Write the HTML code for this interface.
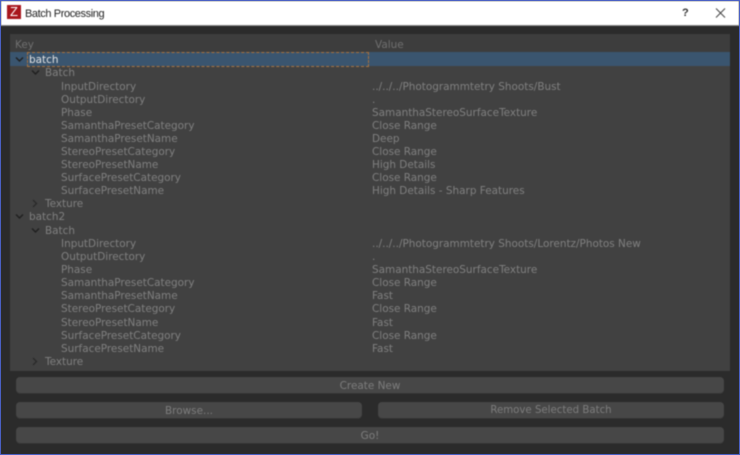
<!DOCTYPE html>
<html><head><meta charset="utf-8">
<style>
html,body{margin:0;padding:0;background:#2b2b2b}
#w{position:relative;width:740px;height:455px;overflow:hidden;background:#2b2b2b;font-family:"DejaVu Sans",sans-serif;font-size:10.45px}
#w div{position:absolute;white-space:pre}
#in{left:0;top:0;width:740px;height:455px;filter:blur(.4px)}
.b{background:#474747;border-radius:4px;height:16px;box-shadow:0 1px 0 #363636}
.bt{color:#7d7d7d;line-height:18px;text-align:center}
.t{color:#808080;line-height:14px;height:14px}
.k{left:61px}.v{left:372px}.g{left:45px}
svg{position:absolute;left:0;top:0}
</style></head><body>
<div id="w"><div id="in">
<div style="left:1px;top:1px;width:738px;height:24px;background:#fff"></div>
<div style="left:0;top:25px;width:740px;height:1px;background:#8a8a8a"></div>
<div style="left:7px;top:5px;width:14px;height:14px;background:#a8161c;color:#fff;font:13px/14px 'Liberation Sans',sans-serif;text-align:center">Z</div>
<div style="left:25px;top:6px;color:#222;font:11px/16px 'Liberation Sans',sans-serif;letter-spacing:-.4px">Batch Processing</div>
<div style="left:682px;top:5px;color:#333;font:bold 11px/16px 'Liberation Sans',sans-serif">?</div>

<div style="left:10px;top:34px;width:720px;height:337px;background:#414141"></div>
<div style="left:10px;top:34px;width:720px;height:18px;background:#3d3d3d"></div>
<div class="t" style="left:15px;top:38px;color:#707070">Key</div>
<div class="t" style="left:375px;top:38px;color:#707070">Value</div>
<div style="left:10px;top:52px;width:720px;height:14px;background:#3a556f"></div>
<div style="left:27px;top:52px;width:340px;height:13px;border:1px dashed #a9733f"></div>
<div class="t" style="left:29px;top:53px;color:#e4e4e4">batch</div>

<div class="t g" style="top:66px">Batch</div>
<div class="t k" style="top:80px">InputDirectory</div><div class="t v" style="top:80px">../../../Photogrammtetry Shoots/Bust</div>
<div class="t k" style="top:93px">OutputDirectory</div><div class="t v" style="top:93px">.</div>
<div class="t k" style="top:106px">Phase</div><div class="t v" style="top:106px">SamanthaStereoSurfaceTexture</div>
<div class="t k" style="top:119px">SamanthaPresetCategory</div><div class="t v" style="top:119px">Close Range</div>
<div class="t k" style="top:132px">SamanthaPresetName</div><div class="t v" style="top:132px">Deep</div>
<div class="t k" style="top:145px">StereoPresetCategory</div><div class="t v" style="top:145px">Close Range</div>
<div class="t k" style="top:158px">StereoPresetName</div><div class="t v" style="top:158px">High Details</div>
<div class="t k" style="top:171px">SurfacePresetCategory</div><div class="t v" style="top:171px">Close Range</div>
<div class="t k" style="top:184px">SurfacePresetName</div><div class="t v" style="top:184px">High Details - Sharp Features</div>
<div class="t g" style="top:197px">Texture</div>
<div class="t" style="left:29px;top:210px">batch2</div>
<div class="t g" style="top:224px">Batch</div>
<div class="t k" style="top:237px">InputDirectory</div><div class="t v" style="top:237px">../../../Photogrammtetry Shoots/Lorentz/Photos New</div>
<div class="t k" style="top:250px">OutputDirectory</div><div class="t v" style="top:250px">.</div>
<div class="t k" style="top:263px">Phase</div><div class="t v" style="top:263px">SamanthaStereoSurfaceTexture</div>
<div class="t k" style="top:276px">SamanthaPresetCategory</div><div class="t v" style="top:276px">Close Range</div>
<div class="t k" style="top:289px">SamanthaPresetName</div><div class="t v" style="top:289px">Fast</div>
<div class="t k" style="top:302px">StereoPresetCategory</div><div class="t v" style="top:302px">Close Range</div>
<div class="t k" style="top:316px">StereoPresetName</div><div class="t v" style="top:316px">Fast</div>
<div class="t k" style="top:329px">SurfacePresetCategory</div><div class="t v" style="top:329px">Close Range</div>
<div class="t k" style="top:342px">SurfacePresetName</div><div class="t v" style="top:342px">Fast</div>
<div class="t g" style="top:355px">Texture</div>

<div class="b bt" style="left:16px;top:377px;width:708px">Create New</div>
<div class="b bt" style="left:16px;top:402px;width:346px">Browse...</div>
<div class="b bt" style="left:378px;top:402px;width:346px;font-size:10.2px">Remove Selected Batch</div>
<div class="b bt" style="left:16px;top:426.500px;width:708px">Go!</div>

<svg width="740" height="455" fill="none">
<path d="M16 57.500l3.500 3.500 3.500-3.500M32 70.500l3.500 3.500 3.500-3.500M16 214.500l3.500 3.500 3.500-3.500M32 228.500l3.500 3.500 3.500-3.500" stroke="#1f1f1f" stroke-width="1.400"/>
<path d="M33 200l3.500 3.500-3.500 3.500M33 358l3.500 3.500-3.500 3.500" stroke="#2a2a2a" stroke-width="1.400"/>
<path d="M716 8.500l9 9M725 8.500l-9 9" stroke="#444" stroke-width="1"/>
</svg>
</div>
<svg width="740" height="455" fill="none"><rect x=".5" y=".5" width="739" height="454" stroke="#4a60c4"/></svg>
</div>
</body></html>
